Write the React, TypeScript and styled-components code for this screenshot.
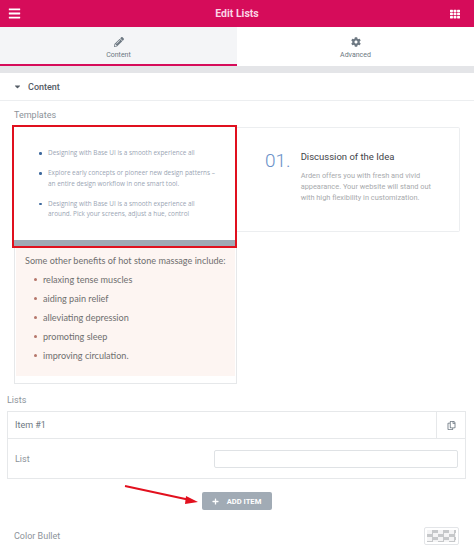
import * as React from 'react';
import styled, { createGlobalStyle } from 'styled-components';
import { FaBars, FaCaretDown, FaCog, FaPencilAlt, FaPlus, FaRegCopy, FaTh } from 'react-icons/fa';

const GlobalStyle = createGlobalStyle`
    html, body {
        margin: 0;
        padding: 0;
        background: #fff;
        font-family: Roboto, "Liberation Sans", sans-serif;
    }
    * {
        box-sizing: border-box;
    }
`;

const Page = styled.div`
    width: 474px;
    height: 556px;
    overflow: hidden;
    background: #fff;
`;

const Header = styled.header`
    height: 27px;
    padding: 0 14px 0 8px;
    display: flex;
    align-items: center;
    justify-content: space-between;
    background: #d60c5a;
    color: #fff;
`;

const HeaderTitle = styled.h1`
    margin: 0 0 0 3px;
    font-size: 10.5px;
    font-weight: 700;
    color: #fbd5e5;
`;

const Tabs = styled.nav`
    display: grid;
    grid-template-columns: 237px 237px;
    height: 39px;
`;

const Tab = styled.div<{ $active?: boolean }>`
    display: flex;
    flex-direction: column;
    align-items: center;
    padding-top: 10px;
    gap: 4px;
    color: #6d7882;
    background: ${p => (p.$active ? '#f4f5f7' : '#fff')};
    border-bottom: 2px solid ${p => (p.$active ? '#d60c5a' : 'transparent')};
    font-size: 7px;
`;

const Strip = styled.div`
    height: 7px;
    background: #e4e5e8;
`;

const SectionHead = styled.div`
    height: 28px;
    padding-left: 13px;
    display: flex;
    align-items: center;
    gap: 6px;
    border-bottom: 1px solid #eceef0;
    font-size: 9px;
    font-weight: 500;
    color: #555d66;
`;

const TemplatesLabel = styled.div`
    padding: 8px 0 0 14px;
    margin-bottom: 4px;
    font-size: 9px;
    line-height: 12px;
    color: #8c939a;
`;

const ListsLabel = styled(TemplatesLabel)`
    padding: 10px 0 0 7px;
    margin-bottom: 5px;
`;

const Templates = styled.div`
    margin-left: 12px;
    display: grid;
    grid-template-columns: 225px 223px;
    align-items: start;
`;

const TemplateColumn = styled.div`
    display: flex;
    flex-direction: column;
`;

const SelectedCard = styled.div`
    height: 123px;
    border: 2px solid #e0101e;
    background: #fff;
    display: flex;
    flex-direction: column;
`;

const BulletList = styled.ul`
    flex: 1;
    margin: 0;
    padding: 21px 16px 0 34px;
    list-style: none;
    display: flex;
    flex-direction: column;
    gap: 9.5px;
`;

const BulletItem = styled.li`
    position: relative;
    font-family: "Open Sans", sans-serif;
    font-size: 6.4px;
    line-height: 10.5px;
    color: #9aa5b4;
    &::before {
        content: '';
        position: absolute;
        left: -9px;
        top: 4px;
        width: 2.5px;
        height: 2.5px;
        border-radius: 50%;
        background: #3f6a9e;
    }
`;

const GreyBar = styled.div`
    height: 6px;
    background: #9fa9b5;
`;

const StepCard = styled.div`
    margin-top: 2px;
    height: 105px;
    padding: 22px 24px 0 28px;
    display: flex;
    gap: 10px;
    border: 1px solid #eceef0;
    border-left: 0;
    border-radius: 0 2px 2px 0;
`;

const StepNumber = styled.div`
    font-size: 19px;
    font-weight: 300;
    line-height: 22px;
    color: #6a90c8;
    white-space: nowrap;
`;

const StepTitle = styled.div`
    font-size: 9.5px;
    font-weight: 400;
    line-height: 14px;
    color: #3f4449;
    margin-bottom: 6px;
`;

const StepText = styled.div`
    font-size: 7.4px;
    line-height: 11.2px;
    color: #a8aaad;
`;

const BenefitsCard = styled.div`
    margin-left: 2px;
    height: 136px;
    padding: 0 1px 7px 1px;
    border: 1px solid #e6e8ea;
    border-top: 0;
`;

const BenefitsBody = styled.div`
    height: 100%;
    padding: 7px 0 0 9px;
    background: #fdf5f2;
    font-family: Lato, sans-serif;
    font-size: 9.1px;
    color: #6f6f6f;
`;

const BenefitsIntro = styled.div`
    line-height: 12px;
    white-space: nowrap;
`;

const BenefitsList = styled.ul`
    margin: 7px 0 0;
    padding: 0 0 0 18px;
    list-style: none;
    display: flex;
    flex-direction: column;
    gap: 7px;
`;

const BenefitsItem = styled.li`
    position: relative;
    line-height: 12px;
    &::before {
        content: '';
        position: absolute;
        left: -9px;
        top: 4px;
        width: 3px;
        height: 3px;
        border-radius: 50%;
        background: #b5766a;
    }
`;

const ItemBox = styled.div`
    margin: 0 8px 0 7px;
    height: 68px;
    border: 1px solid #e6e8ea;
`;

const ItemHead = styled.div`
    height: 27px;
    display: flex;
    align-items: center;
    border-bottom: 1px solid #e6e8ea;
`;

const ItemTitle = styled.div`
    flex: 1;
    padding-left: 7px;
    font-size: 9px;
    color: #6d7882;
`;

const CopyButton = styled.div`
    width: 29px;
    height: 100%;
    display: flex;
    align-items: center;
    justify-content: center;
    border-left: 1px solid #e6e8ea;
    color: #6d7882;
    font-size: 9px;
`;

const ItemRow = styled.div`
    height: 39px;
    padding: 0 7px;
    display: flex;
    align-items: center;
    justify-content: space-between;
    font-size: 9px;
    color: #8c939a;
`;

const ItemInput = styled.input`
    width: 244px;
    height: 18px;
    border: 1px solid #dfe2e5;
    border-radius: 2px;
    background: #fff;
    outline: none;
`;

const AddRow = styled.div`
    position: relative;
    margin-top: 13px;
    display: flex;
    justify-content: center;
`;

const AddButton = styled.button`
    width: 70px;
    height: 18px;
    margin-left: -1px;
    padding: 0;
    border: 0;
    border-radius: 2px;
    display: flex;
    align-items: center;
    justify-content: center;
    gap: 8px;
    background: #a1abb5;
    color: #fff;
    font-family: inherit;
    font-size: 7.6px;
    font-weight: 700;
`;

const Arrow = styled.svg`
    position: absolute;
    left: 124px;
    top: -8px;
`;

const ColorRow = styled.div`
    margin-top: 17px;
    padding: 0 15px 0 14px;
    display: flex;
    align-items: center;
    justify-content: space-between;
    font-size: 9px;
    color: #8c939a;
`;

const Swatch = styled.div`
    width: 35px;
    height: 18px;
    padding: 2px;
    border: 1px solid #e3e5e8;
    border-radius: 2px;
    background: repeating-conic-gradient(#c6c8ca 0 25%, #f4f4f5 0 50%) 0 0 / 11px 7px content-box;
`;

const intro = 'Some other benefits of hot stone massage include:';
const benefits = [
    'relaxing tense muscles',
    'aiding pain relief',
    'alleviating depression',
    'promoting sleep',
    'improving circulation.',
];

const App: React.FC = () => (
    <Page>
        <GlobalStyle />
        <Header>
            <FaBars size={13} />
            <HeaderTitle>Edit Lists</HeaderTitle>
            <FaTh size={10} />
        </Header>
        <Tabs>
            <Tab $active>
                <FaPencilAlt size={10} />
                Content
            </Tab>
            <Tab>
                <FaCog size={10} />
                Advanced
            </Tab>
        </Tabs>
        <Strip />
        <SectionHead>
            <FaCaretDown size={9} />
            Content
        </SectionHead>
        <TemplatesLabel>Templates</TemplatesLabel>
        <Templates>
            <TemplateColumn>
                <SelectedCard>
                    <BulletList>
                        <BulletItem>Designing with Base UI is a smooth experience all</BulletItem>
                        <BulletItem>Explore early concepts or pioneer new design patterns – an entire design workflow in one smart tool.</BulletItem>
                        <BulletItem>Designing with Base UI is a smooth experience all around. Pick your screens, adjust a hue, control</BulletItem>
                    </BulletList>
                    <GreyBar />
                </SelectedCard>
                <BenefitsCard>
                    <BenefitsBody>
                        <BenefitsIntro>{intro}</BenefitsIntro>
                        <BenefitsList>
                            {benefits.map(b => (
                                <BenefitsItem key={b}>{b}</BenefitsItem>
                            ))}
                        </BenefitsList>
                    </BenefitsBody>
                </BenefitsCard>
            </TemplateColumn>
            <StepCard>
                <StepNumber>01.</StepNumber>
                <div>
                    <StepTitle>Discussion of the Idea</StepTitle>
                    <StepText>Arden offers you with fresh and vivid appearance. Your website will stand out with high flexibility in customization.</StepText>
                </div>
            </StepCard>
        </Templates>
        <ListsLabel>Lists</ListsLabel>
        <ItemBox>
            <ItemHead>
                <ItemTitle>Item #1</ItemTitle>
                <CopyButton>
                    <FaRegCopy />
                </CopyButton>
            </ItemHead>
            <ItemRow>
                List
                <ItemInput />
            </ItemRow>
        </ItemBox>
        <AddRow>
            <Arrow width="80" height="24" viewBox="0 0 80 24">
                <path d="M1 2 L66 16" stroke="#e2101e" strokeWidth="2" fill="none" />
                <polygon points="74,18 62,12 61,20" fill="#e2101e" />
            </Arrow>
            <AddButton>
                <FaPlus size={7} />
                ADD ITEM
            </AddButton>
        </AddRow>
        <ColorRow>
            Color Bullet
            <Swatch />
        </ColorRow>
    </Page>
);

export default App;
